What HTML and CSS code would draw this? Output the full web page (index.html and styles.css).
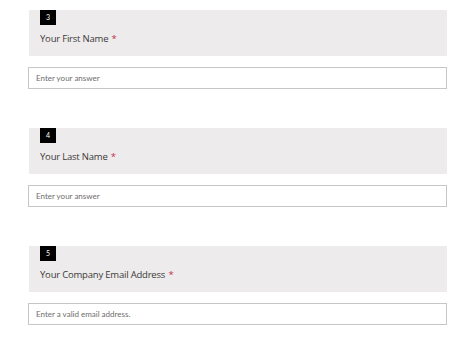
FILE: index.html
```html
<!DOCTYPE html>
<html lang="en">
<head>
    <meta charset="UTF-8">
    <meta name="viewport" content="width=device-width, initial-scale=1.0">
    <title>Form</title>
    <link rel="stylesheet" href="styles.css">
</head>
<body>
    <div class="form">
        <!-- Pergunta 3 -->
        <div class="question">
            <div class="question-head">
                <span class="badge">3</span>
                <div class="label">Your First Name <span class="req">*</span></div>
            </div>
            <input class="answer" type="text" placeholder="Enter your answer">
        </div>

        <!-- Pergunta 4 -->
        <div class="question">
            <div class="question-head">
                <span class="badge">4</span>
                <div class="label">Your Last Name <span class="req">*</span></div>
            </div>
            <input class="answer" type="text" placeholder="Enter your answer">
        </div>

        <!-- Pergunta 5 -->
        <div class="question">
            <div class="question-head">
                <span class="badge">5</span>
                <div class="label">Your Company Email Address <span class="req">*</span></div>
            </div>
            <input class="answer" type="email" placeholder="Enter a valid email address.">
        </div>
    </div>
</body>
</html>
```

FILE: styles.css
```css
* {
    margin: 0;
    padding: 0;
    box-sizing: border-box;
}

body {
    font-family: Lato, "Open Sans", sans-serif;
    background-color: #fff;
    color: #323130;
}

.form {
    width: 419px;
    margin-left: 28px;
    padding-top: 10px;
}

.question {
    margin-bottom: 39px;
}

.question-head {
    margin-left: 1px;
    height: 46px;
    padding: 0 11px;
    background-color: #edebeb;
}

.badge {
    display: block;
    width: 16px;
    height: 15px;
    background-color: #000;
    color: #fff;
    font-size: 7px;
    line-height: 15px;
    text-align: center;
}

.label {
    margin-top: 6px;
    font-family: "Open Sans", "Noto Sans", sans-serif;
    font-size: 9.5px;
    line-height: 16px;
    letter-spacing: -0.2px;
    color: #3b3a39;
}

.req {
    margin-left: 1px;
    color: #c4314b;
}

.answer {
    display: block;
    width: 100%;
    height: 22px;
    margin-top: 11px;
    padding: 0 7px;
    border: 1px solid #c8c6c4;
    font-family: inherit;
    font-size: 8px;
    color: #323130;
    outline: none;
}

.answer::placeholder {
    color: #6e6d6c;
}
```
